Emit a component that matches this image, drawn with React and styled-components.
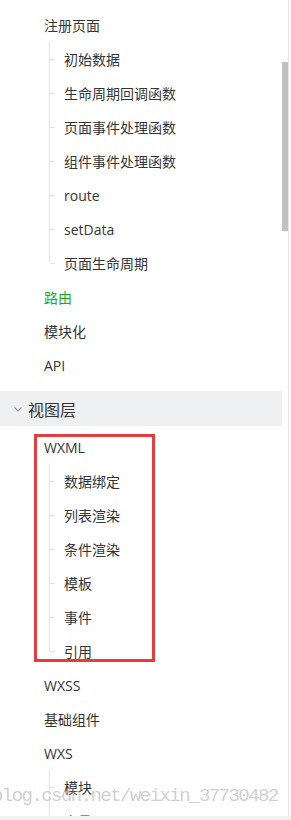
import React from "react";
import styled, { createGlobalStyle } from "styled-components";

const GlobalStyle = createGlobalStyle`
  html, body {
    margin: 0;
    padding: 0;
    background: #fff;
    overflow: hidden;
  }
  body {
    font-family: "Open Sans", "Noto Sans CJK SC", sans-serif;
  }
`;

const registerSubs = ["初始数据", "生命周期回调函数", "页面事件处理函数", "组件事件处理函数", "route", "setData", "页面生命周期"];
const wxmlSubs = ["数据绑定", "列表渲染", "条件渲染", "模板", "事件", "引用"];
const wxsSubs = ["模块", "变量"];

function Chevron() {
  return (
    <ChevronSvg width="8" height="5" viewBox="0 0 8 5">
      <polyline points="0.5,0.5 4,4 7.5,0.5" fill="none" stroke="#9a9a9a" strokeWidth="1.2" />
    </ChevronSvg>
  );
}

function SubTree({ items, open }) {
  return (
    <SubList>
      {items.map((label, i) => (
        <SubItem key={label} $last={!open && i === items.length - 1}>
          {label}
        </SubItem>
      ))}
    </SubList>
  );
}

export default function App() {
  return (
    <>
      <GlobalStyle />
      <Page>
        <Sidebar>
          <Nav>
            <Item>注册页面</Item>
            <SubTree items={registerSubs} />
            <Item $active>路由</Item>
            <Item>模块化</Item>
            <Item>API</Item>
            <Section>
              <Chevron />
              视图层
            </Section>
            <Group>
              <Item>WXML</Item>
              <SubTree items={wxmlSubs} />
              <Item>WXSS</Item>
              <Item>基础组件</Item>
              <Item>WXS</Item>
              <SubTree items={wxsSubs} open />
            </Group>
          </Nav>
          <Track>
            <Thumb />
          </Track>
        </Sidebar>
        <BottomBar />
        <Highlight />
        <Watermark>blog.csdn.net/weixin_37730482</Watermark>
      </Page>
    </>
  );
}

const Page = styled.div`
  position: relative;
  width: 291px;
  height: 820px;
  overflow: hidden;
  display: flex;
  flex-direction: column;
`;

const Sidebar = styled.div`
  display: flex;
  align-items: flex-start;
  width: 288px;
  height: 816px;
  flex-shrink: 0;
  border-right: 1px solid #e6e6e6;
  overflow: hidden;
`;

const Nav = styled.nav`
  width: 282px;
  flex-shrink: 0;
  padding-top: 8px;
  display: flex;
  flex-direction: column;
`;

const Item = styled.div`
  flex-shrink: 0;
  height: 34px;
  display: flex;
  align-items: center;
  padding-left: 44px;
  font-size: 14px;
  color: ${(p) => (p.$active ? "#1aad19" : "#353535")};
  white-space: nowrap;
`;

const Section = styled.div`
  flex-shrink: 0;
  margin-top: 9px;
  height: 35px;
  display: flex;
  align-items: center;
  gap: 6px;
  padding-left: 14px;
  background: #eef0f2;
  font-size: 16px;
  color: #353535;
`;

const ChevronSvg = styled.svg`
  display: block;
  margin-top: 1px;
`;

const Group = styled.div`
  flex-shrink: 0;
  padding-top: 4px;
  display: flex;
  flex-direction: column;
`;

const SubList = styled.div`
  flex-shrink: 0;
  margin-left: 49px;
  display: flex;
  flex-direction: column;
`;

const SubItem = styled.div`
  position: relative;
  flex-shrink: 0;
  height: 34px;
  display: flex;
  align-items: center;
  padding-left: 15px;
  font-size: 14px;
  color: #353535;
  white-space: nowrap;

  &::before {
    content: "";
    position: absolute;
    left: 0;
    top: 0;
    width: 1px;
    height: ${(p) => (p.$last ? "17px" : "34px")};
    background: #e3e3e3;
  }

  &::after {
    content: "";
    position: absolute;
    left: 1px;
    top: 17px;
    width: 5px;
    height: 1px;
    background: #e3e3e3;
  }
`;

const Track = styled.div`
  flex-shrink: 0;
  width: 6px;
  padding-top: 62px;
`;

const Thumb = styled.div`
  width: 6px;
  height: 169px;
  background: #c1c1c1;
`;

const BottomBar = styled.div`
  flex-shrink: 0;
  height: 4px;
  background: #f1f1f1;
`;

const Highlight = styled.div`
  position: absolute;
  left: 34px;
  top: 434px;
  width: 121px;
  height: 228px;
  box-sizing: border-box;
  border: 3px solid #e43c3f;
  pointer-events: none;
`;

const Watermark = styled.div`
  position: absolute;
  left: -8px;
  top: 784px;
  font-family: "Liberation Mono", monospace;
  font-size: 19px;
  letter-spacing: -1.55px;
  line-height: 24px;
  color: rgba(160, 160, 160, 0.5);
  white-space: nowrap;
  pointer-events: none;
`;
